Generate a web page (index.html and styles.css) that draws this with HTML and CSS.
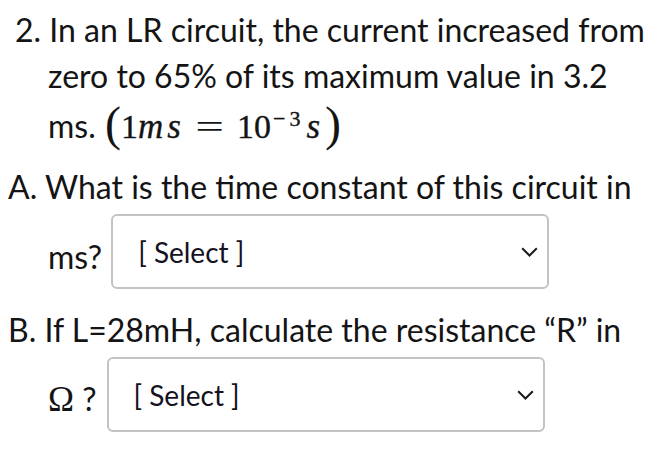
FILE: index.html
```html
<!DOCTYPE html>
<html>
<head>
<meta charset="utf-8">
<link rel="stylesheet" href="styles.css">
</head>
<body>
<div class="question">
  <p class="stem">2. In an LR circuit, the current increased from<br>zero to 65% of its maximum value in 3.2<br>ms. <span class="math"><span class="paren">(</span><span class="mn">1</span><span class="mi">ms</span><span class="mo">=</span><span class="mn">10</span><span class="sup">−3</span><span class="mi">s</span><span class="paren rp">)</span></span></p>
  <p class="part part-a">A. What is the time constant of this circuit in</p>
  <div class="answer">
    <span class="label">ms?</span>
    <div class="select">
      <span class="select-text">[ Select ]</span>
      <svg class="chevron" width="17" height="10" viewBox="0 0 17 10"><path d="M1.2 1.2 L8.5 8.5 L15.8 1.2" fill="none" stroke="#1a1a1a" stroke-width="2"/></svg>
    </div>
  </div>
  <p class="part part-b">B. If L=28mH, calculate the resistance “R” in</p>
  <div class="answer answer-b">
    <span class="label"><span class="omega">Ω</span> ?</span>
    <div class="select">
      <span class="select-text">[ Select ]</span>
      <svg class="chevron" width="17" height="10" viewBox="0 0 17 10"><path d="M1.2 1.2 L8.5 8.5 L15.8 1.2" fill="none" stroke="#1a1a1a" stroke-width="2"/></svg>
    </div>
  </div>
</div>
</body>
</html>
```
FILE: styles.css
```css
html, body {
  margin: 0;
  padding: 0;
  background: #ffffff;
}
body {
  font-family: Lato, "Noto Sans", sans-serif;
  font-size: 32px;
  line-height: 46px;
  color: #141414;
}
.question {
  width: 659px;
}
.stem {
  margin: 7px 0 0 0;
  padding-left: 48px;
  text-indent: -33px;
  white-space: nowrap;
}
.math {
  display: inline-block;
  text-indent: 0;
  font-family: "Liberation Serif", "Times New Roman", serif;
  font-size: 34px;
  line-height: 46px;
  margin-top: 5px;
  margin-left: 1px;
  -webkit-text-stroke: 0.35px #141414;
}
.paren {
  font-size: 48px;
  line-height: 0;
  vertical-align: -2px;
  -webkit-text-stroke: 0;
}
.rp {
  margin-left: 1px;
}
.mn {
  margin-left: 0;
}
.mi {
  font-style: italic;
  font-size: 35px;
  letter-spacing: 4px;
}
.mo {
  display: inline-block;
  transform: scaleX(1.5);
  margin: 0 18px 0 15px;
  -webkit-text-stroke: 0;
}
.sup {
  font-size: 22px;
  line-height: 0;
  vertical-align: 12px;
  letter-spacing: 4px;
  margin: 0 2px 0 2px;
}
.part {
  margin: 0;
  padding-left: 8px;
  white-space: nowrap;
}
.part-a {
  margin-top: 14px;
}
.part-b {
  margin-top: 18px;
}
.answer {
  display: flex;
  align-items: flex-end;
  padding-left: 48px;
  margin-top: 4px;
}
.label {
  margin-bottom: 9px;
  margin-right: 9px;
}
.answer-b .label {
  margin-right: 10px;
}
.omega {
  font-family: "Liberation Serif", serif;
  font-size: 35px;
}
.select {
  width: 438px;
  height: 75px;
  box-sizing: border-box;
  border: 2px solid #c3c3c3;
  border-radius: 6px;
  display: flex;
  align-items: center;
  justify-content: space-between;
  padding: 0 9px 0 25px;
}
.select-text {
  font-size: 28px;
  color: #14121e;
}
.chevron {
  display: block;
}
```
